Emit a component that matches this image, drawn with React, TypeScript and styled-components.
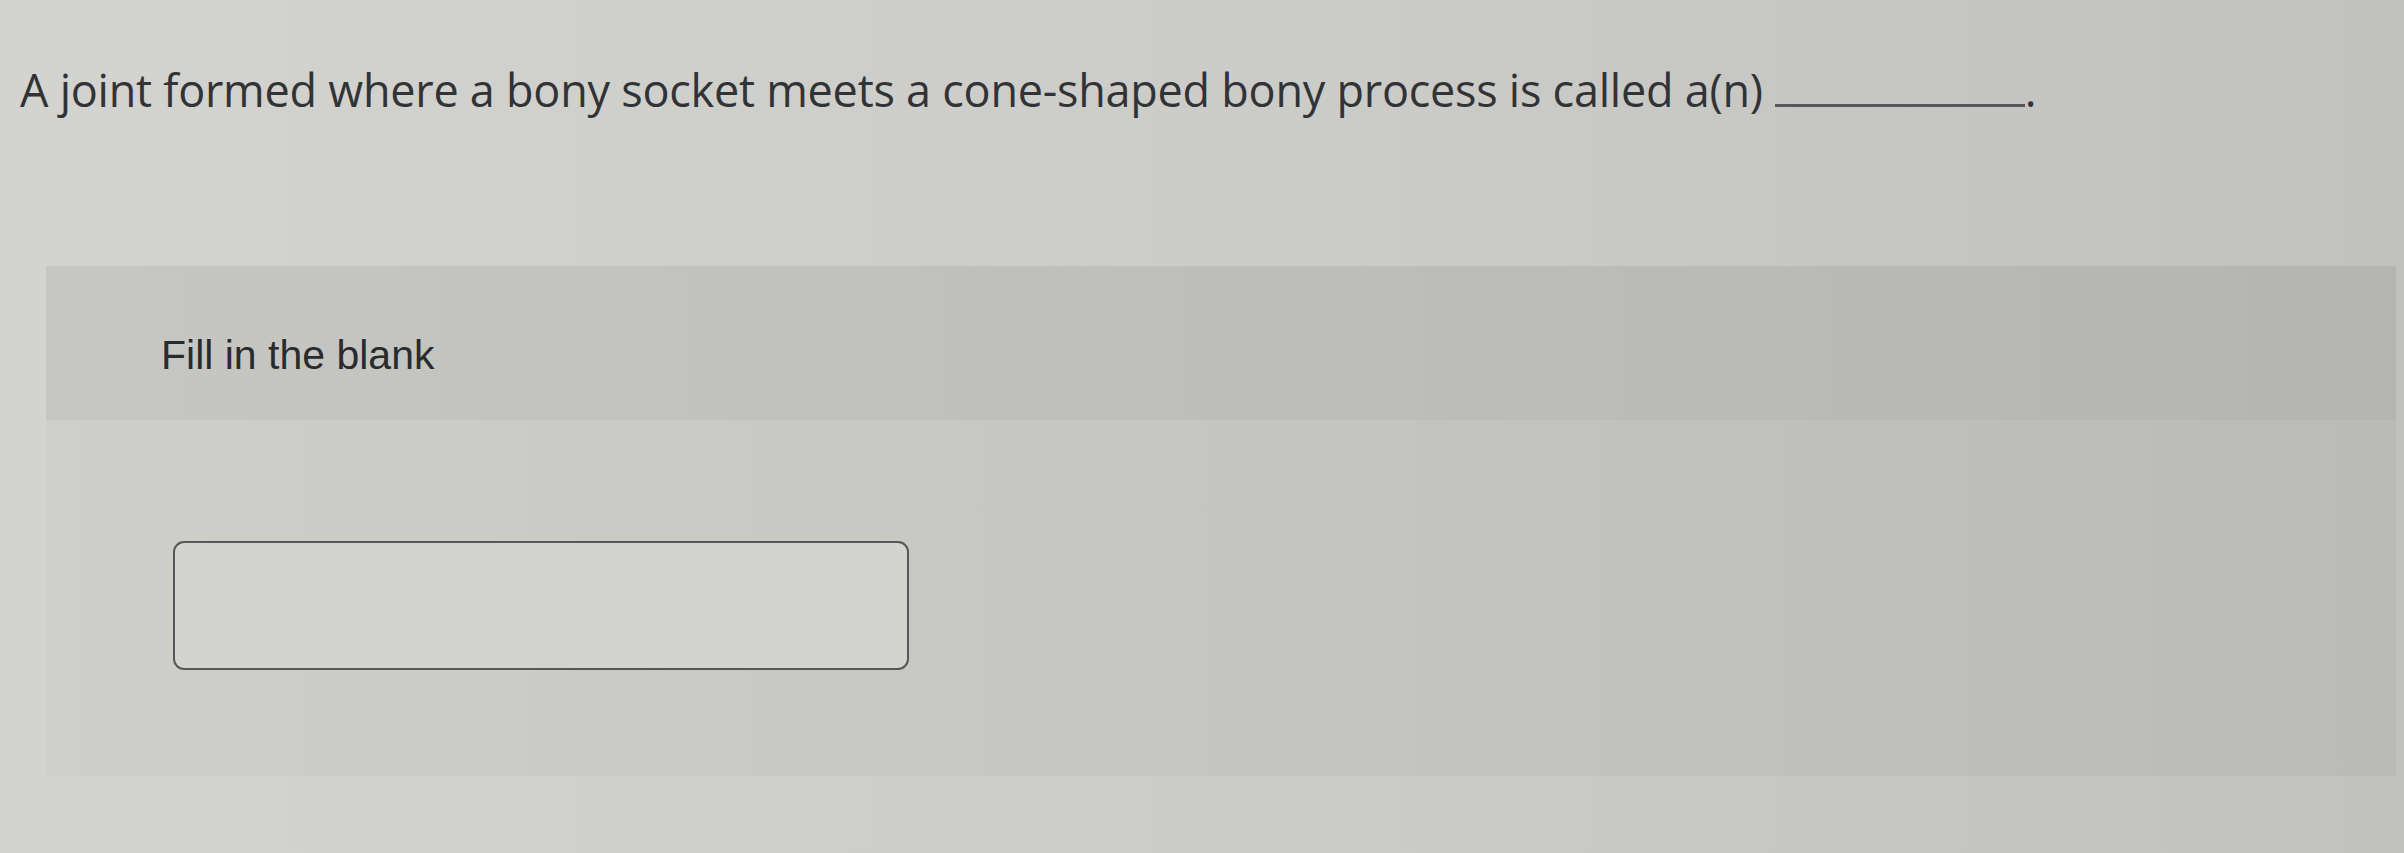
import React from "react";
import styled, { createGlobalStyle } from "styled-components";

const GlobalStyle = createGlobalStyle`
  html, body {
    margin: 0;
    padding: 0;
  }
  body {
    background: linear-gradient(to right, #d3d4cf 0%, #cbccc7 55%, #c1c2bd 100%);
    min-height: 100vh;
  }
`;

const Page = styled.main`
  min-height: 853px;
  display: flex;
  flex-direction: column;
  padding: 59px 8px 0 20px;
  box-sizing: border-box;
`;

const Question = styled.p`
  margin: 0;
  font-family: "Open Sans", "Liberation Sans", sans-serif;
  font-size: 45px;
  font-weight: 500;
  letter-spacing: -0.25px;
  line-height: normal;
  color: #323336;
  white-space: nowrap;
`;

const Blank = styled.span`
  display: inline-block;
  width: 250px;
  margin-left: 12px;
  border-bottom: 3px solid #55575a;
  vertical-align: baseline;
`;

const Panel = styled.section`
  margin: 146px 0 0 26px;
  display: flex;
  flex-direction: column;
`;

const PanelHeader = styled.header`
  height: 154px;
  box-sizing: border-box;
  padding: 66px 0 0 115px;
  background: linear-gradient(to right, #c6c7c2 0%, #bdbeb9 55%, #b4b5b0 100%);
  font-family: "Liberation Sans", Arial, sans-serif;
  font-size: 41px;
  line-height: normal;
  color: #2a2b2e;
`;

const PanelBody = styled.div`
  padding: 121px 0 106px 127px;
  background: linear-gradient(to right, #cecfca 0%, #c4c5c0 55%, #babbb6 100%);
`;

const AnswerInput = styled.input`
  display: block;
  width: 736px;
  height: 129px;
  box-sizing: border-box;
  border: 2px solid #55575a;
  border-radius: 11px;
  background: #d3d4cf;
  font-family: "Liberation Sans", Arial, sans-serif;
  font-size: 34px;
  padding: 0 20px;
  outline: none;
`;

const App: React.FC = () => {
  return (
    <>
      <GlobalStyle />
      <Page>
        <Question>
          A joint formed where a bony socket meets a cone-shaped bony process is
          called a(n)
          <Blank />.
        </Question>
        <Panel>
          <PanelHeader>Fill in the blank</PanelHeader>
          <PanelBody>
            <AnswerInput type="text" aria-label="Answer" />
          </PanelBody>
        </Panel>
      </Page>
    </>
  );
};

export default App;
